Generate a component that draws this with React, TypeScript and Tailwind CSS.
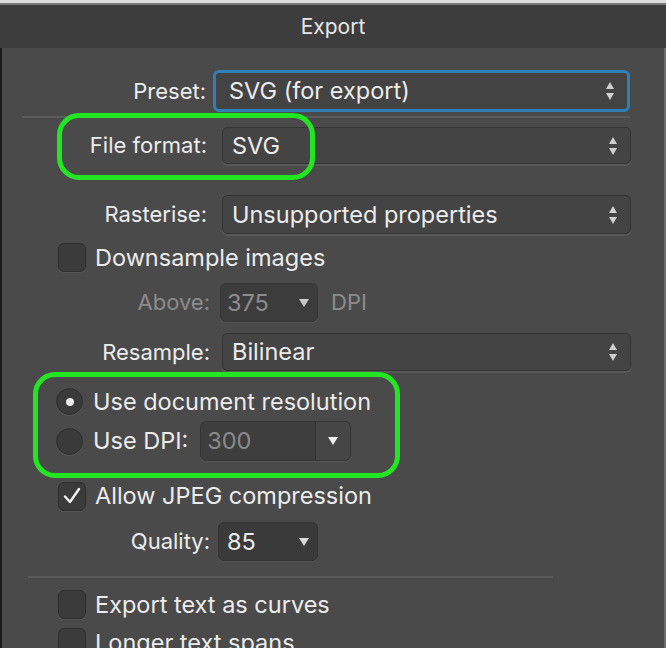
import React from "react";

const font = { fontFamily: "Inter, 'Noto Sans', sans-serif" };

function Stepper() {
  return (
    <div className="flex flex-col items-center gap-[4px] mr-[13px]">
      <svg width="8" height="7" viewBox="0 0 8 7"><path d="M4 0 L8 7 L0 7 Z" fill="#d0d0d0" /></svg>
      <svg width="8" height="7" viewBox="0 0 8 7"><path d="M0 0 L8 0 L4 7 Z" fill="#d0d0d0" /></svg>
    </div>
  );
}

function DownTri({ color = "#d8d8d8" }: { color?: string }) {
  return (
    <svg width="10" height="8" viewBox="0 0 10 8"><path d="M0 0 L10 0 L5 8 Z" fill={color} /></svg>
  );
}

function Check({ checked = false }: { checked?: boolean }) {
  return (
    <div className="w-[28px] h-[29px] rounded-[6px] bg-[#3b3b3b] border border-[#2f2f2f] shadow-[0_1px_0_#565656] flex items-center justify-center shrink-0">
      {checked && (
        <svg width="20" height="20" viewBox="0 0 20 20">
          <path d="M3 10.5 L8 16 L17 3" fill="none" stroke="#f0f0f0" strokeWidth="2.4" strokeLinecap="round" strokeLinejoin="round" />
        </svg>
      )}
    </div>
  );
}

function Radio({ on = false }: { on?: boolean }) {
  return (
    <div className="w-[27px] h-[27px] rounded-full bg-[#3a3a3a] border border-[#2e2e2e] shadow-[0_1px_0_#565656] flex items-center justify-center shrink-0">
      {on && <div className="w-[8px] h-[8px] rounded-full bg-[#ededed]" />}
    </div>
  );
}

export default function App() {
  return (
    <div className="w-[666px] h-[648px] overflow-hidden relative bg-[#4a4a4a] flex flex-col text-[#ececec]" style={font}>
      <div className="shrink-0 h-[3px] bg-[#dcdcdc]" />
      <div className="shrink-0 h-[2px] bg-[#7c7c7c]" />
      <div className="shrink-0 h-[43px] bg-[#3d3d3d] flex items-center justify-center text-[21px] text-[#e8e8e8]">
        Export
      </div>
      <div className="relative flex-1 min-h-0 overflow-hidden flex flex-col border-l-[2px] border-l-[#1c1c1c] border-r-[2px] border-r-[#6c6c6c]">
        {/* Preset */}
        <div className="shrink-0 mt-[22px] h-[42px] flex items-center">
          <div className="w-[204px] text-right text-[22px]">Preset:</div>
          <div className="ml-[7px] w-[417px] h-[42px] rounded-[6px] border-[3px] border-[#2f80b5] bg-[#434343] flex items-center justify-between">
            <span className="ml-[13px] text-[23.5px]">SVG (for export)</span>
            <Stepper />
          </div>
        </div>
        <div className="shrink-0 mt-[4px] ml-[20px] w-[608px] h-[2px] bg-[#5b5b5b]" />

        {/* File format */}
        <div className="shrink-0 mt-[9px] h-[37px] flex items-center">
          <div className="w-[205px] text-right text-[22px]">File format:</div>
          <div className="ml-[15px] w-[409px] h-[37px] rounded-[5px] border border-[#343434] bg-[#444444] shadow-[0_2px_0_#585858] flex items-center justify-between">
            <span className="ml-[9px] text-[23.5px]">SVG</span>
            <Stepper />
          </div>
        </div>

        {/* Rasterise */}
        <div className="shrink-0 mt-[31px] h-[39px] flex items-center">
          <div className="w-[205px] text-right text-[22px]">Rasterise:</div>
          <div className="ml-[15px] w-[409px] h-[39px] rounded-[5px] border border-[#343434] bg-[#444444] shadow-[0_2px_0_#585858] flex items-center justify-between">
            <span className="ml-[9px] text-[23.5px]">Unsupported properties</span>
            <Stepper />
          </div>
        </div>

        {/* Downsample */}
        <div className="shrink-0 mt-[9px] h-[29px] flex items-center">
          <div className="ml-[56px]"><Check /></div>
          <span className="ml-[9px] text-[23.5px]">Downsample images</span>
        </div>

        {/* Above */}
        <div className="shrink-0 mt-[11px] h-[39px] flex items-center text-[#8c8c8c]">
          <div className="w-[208px] text-right text-[22px]">Above:</div>
          <div className="ml-[10px] w-[98px] h-[39px] rounded-[6px] bg-[#3c3c3c] border border-[#363636] shadow-[0_1px_0_#555555] flex items-center justify-between">
            <span className="ml-[6px] text-[23.5px]">375</span>
            <div className="mr-[8px]"><DownTri color="#c8c8c8" /></div>
          </div>
          <span className="ml-[13px] text-[22px]">DPI</span>
        </div>

        {/* Resample */}
        <div className="shrink-0 mt-[11px] h-[38px] flex items-center">
          <div className="w-[208px] text-right text-[22px]">Resample:</div>
          <div className="ml-[12px] w-[409px] h-[38px] rounded-[5px] border border-[#343434] bg-[#444444] shadow-[0_2px_0_#585858] flex items-center justify-between">
            <span className="ml-[9px] text-[23.5px]">Bilinear</span>
            <Stepper />
          </div>
        </div>

        {/* Radio 1 */}
        <div className="shrink-0 mt-[17px] h-[27px] flex items-center">
          <div className="ml-[54px]"><Radio on /></div>
          <span className="ml-[10px] text-[23.5px]">Use document resolution</span>
        </div>

        {/* Radio 2 */}
        <div className="shrink-0 mt-[6px] h-[40px] flex items-center">
          <div className="ml-[54px]"><Radio /></div>
          <span className="ml-[10px] text-[23.5px]">Use DPI:</span>
          <div className="ml-[12px] w-[151px] h-[40px] rounded-[6px] border border-[#353535] bg-[#3e3e3e] shadow-[0_1px_0_#565656] flex overflow-hidden">
            <div className="flex-1 flex items-center text-[23.5px] text-[#8a8a8a] pl-[6px]">300</div>
            <div className="w-[35px] border-l border-[#333333] bg-[#464646] flex items-center justify-center">
              <DownTri color="#eeeeee" />
            </div>
          </div>
        </div>

        {/* Allow JPEG */}
        <div className="shrink-0 mt-[21px] h-[28px] flex items-center">
          <div className="ml-[56px]"><Check checked /></div>
          <span className="ml-[9px] text-[23.5px]">Allow JPEG compression</span>
        </div>

        {/* Quality */}
        <div className="shrink-0 mt-[12px] h-[39px] flex items-center">
          <div className="w-[208px] text-right text-[22px]">Quality:</div>
          <div className="ml-[8px] w-[100px] h-[39px] rounded-[6px] bg-[#3a3a3a] border border-[#333333] shadow-[0_1px_0_#555555] flex items-center justify-between">
            <span className="ml-[8px] text-[23.5px]">85</span>
            <div className="mr-[8px]"><DownTri /></div>
          </div>
        </div>
        <div className="shrink-0 mt-[15px] ml-[26px] w-[525px] h-[2px] bg-[#5a5a5a]" />

        {/* Export text as curves */}
        <div className="shrink-0 mt-[12px] h-[29px] flex items-center">
          <div className="ml-[56px]"><Check /></div>
          <span className="ml-[9px] text-[23.5px]">Export text as curves</span>
        </div>
        <div className="shrink-0 mt-[9px] h-[29px] flex items-center">
          <div className="ml-[56px]"><Check /></div>
          <span className="ml-[9px] text-[23.5px]">Longer text spans</span>
        </div>

        {/* Green annotations */}
        <div className="absolute left-[55px] top-[65px] w-[258px] h-[67px] rounded-[22px] border-[5px] border-[#22e622] pointer-events-none" />
        <div className="absolute left-[31px] top-[324px] w-[367px] h-[106px] rounded-[22px] border-[5px] border-[#22e622] pointer-events-none" />
      </div>
    </div>
  );
}
